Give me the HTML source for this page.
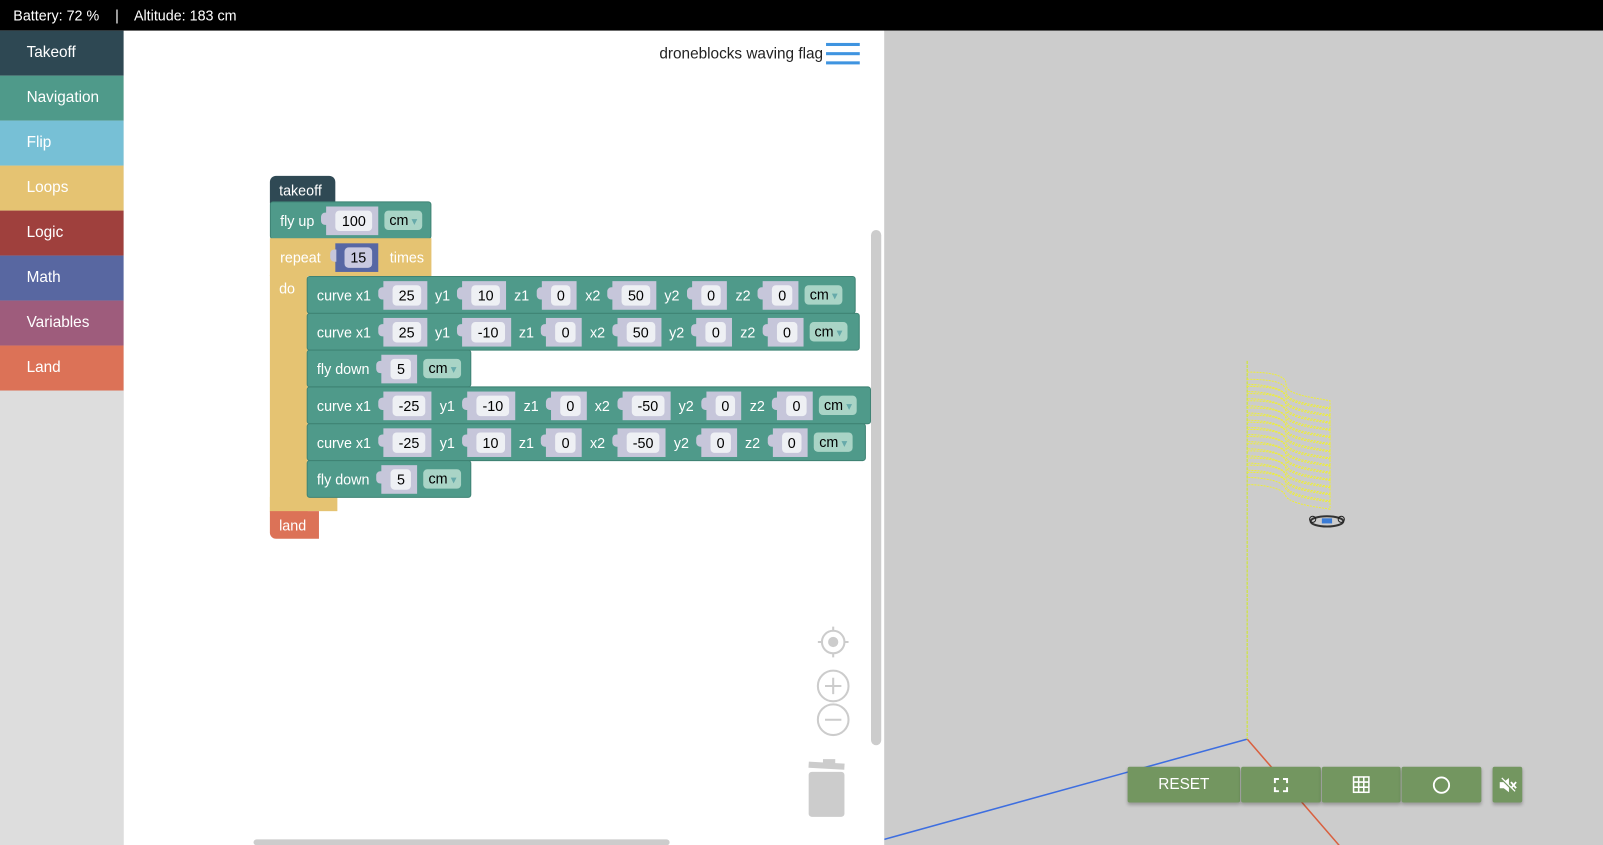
<!DOCTYPE html>
<html><head><meta charset="utf-8">
<style>
*{box-sizing:border-box;margin:0;padding:0}
html,body{width:1603px;height:845px;overflow:hidden;background:#ccc;font-family:"Liberation Sans",Arial,sans-serif}
#w{position:absolute;left:0;top:0;width:1568px;height:827px;transform:scale(1.02232);transform-origin:0 0}
.a{position:absolute}
#top{left:0;top:0;width:1568px;height:30px;background:#000;color:#fff;font-size:14px;line-height:30px;padding-left:13px;white-space:pre}
#side{left:0;top:30px;width:121px;height:797px;background:#ddd}
.it{height:44px;color:#fff;font-size:15px;line-height:44px;padding-left:26px}
#ws{left:121px;top:30px;width:744px;height:797px;background:#fff}
#right{left:865px;top:30px;width:703px;height:797px;background:#ccc}
.blk{position:absolute;color:#fff;font-size:14px;display:flex;align-items:center;white-space:nowrap}
.g{background:#4f9a8a;border:1px solid #3f8374;border-radius:3px}
.slot{background:#c6c6da;height:28px;padding:0 6px 0 9px;display:flex;align-items:center;position:relative;margin-left:12px}
.slot:before{content:"";position:absolute;left:-5px;top:6px;width:6px;height:12px;background:#c6c6da;border-radius:4px 0 0 4px}
.f{background:#eef0f4;color:#000;height:20px;line-height:20px;border-radius:4px;padding:0 6px;font-size:14px}
.lb{margin-left:8px}
.dd{background:#a9d4c6;color:#000;height:19px;line-height:19px;border-radius:4px;padding:0 5px;margin-left:6px;font-size:14px}
.dd:after{content:" \25BE";color:#6aa;font-size:11px}
.btn{position:absolute;top:750px;height:35px;line-height:35px;background:#739660;border-radius:2px;color:#fff;display:flex;align-items:center;justify-content:center;box-shadow:0 2px 3px rgba(0,0,0,.25);font-size:15px}
</style></head><body><div id="w">
<div class="a" id="top">Battery: 72 %    |    Altitude: 183 cm</div>
<div class="a" id="side">
<div class="it" style="background:#2e4853">Takeoff</div>
<div class="it" style="background:#4f9a8a">Navigation</div>
<div class="it" style="background:#77c0d6">Flip</div>
<div class="it" style="background:#e5c372">Loops</div>
<div class="it" style="background:#9f403d">Logic</div>
<div class="it" style="background:#5867a1">Math</div>
<div class="it" style="background:#9e5c7c">Variables</div>
<div class="it" style="background:#dc7257">Land</div>
</div>
<div class="a" id="ws"></div>
<div class="a" id="right"></div>
<div class="a" style="left:645px;top:44px;font-size:15px;color:#222">droneblocks waving flag</div>
<div class="a" style="left:808px;top:42px;width:33px;height:3px;background:#3f94e0"></div>
<div class="a" style="left:808px;top:51px;width:33px;height:3px;background:#3f94e0"></div>
<div class="a" style="left:808px;top:60px;width:33px;height:3px;background:#3f94e0"></div>
<div class="a" style="left:852px;top:225px;width:10px;height:504px;background:#ccc;border-radius:5px"></div>
<div class="a" style="left:248px;top:821px;width:407px;height:6px;background:#ccc;border-radius:3px"></div>
<svg class="a" style="left:780px;top:600px" width="80" height="210" fill="none" stroke="#ccc" stroke-width="2">
<circle cx="35" cy="28" r="11"/><circle cx="35" cy="28" r="4" fill="#ccc"/><path d="M35 13v4M35 39v4M20 28h4M46 28h4"/>
<circle cx="35" cy="71" r="15"/><path d="M27 71h16M35 63v16"/>
<circle cx="35" cy="104" r="15"/><path d="M27 104h16"/>
<path d="M11 148l35 2" stroke-width="6"/><path d="M25 145h12" stroke-width="5"/>
<rect x="11" y="155" width="35" height="44" rx="3" fill="#ccc" stroke="none"/>
</svg>
<div class="blk" style="left:264px;top:172px;width:64px;height:27px;background:#2f4954;border-radius:6px 6px 0 0;padding-left:9px">takeoff</div>
<div class="blk g" style="left:264px;top:197px;width:158px;height:37px;padding-left:9px">fly up<div class="slot"><span class="f">100</span></div><span class="dd">cm</span></div>
<div class="a" style="left:264px;top:233px;width:158px;height:37px;background:#e5c372"></div>
<div class="a" style="left:264px;top:269px;width:37px;height:232px;background:#e5c372"></div>
<div class="a" style="left:264px;top:486px;width:66px;height:14px;background:#e5c372"></div>
<div class="blk" style="left:274px;top:233px;height:37px">repeat<div class="slot" style="background:#5767a4;margin-left:14px"><span class="f" style="background:#c9c9e0">15</span></div><span class="lb" style="margin-left:11px">times</span></div>
<div class="blk" style="left:273px;top:273px;height:18px">do</div>
<div class="blk g" style="left:300px;top:270px;width:537px;height:37px;padding-left:9px">curve x1<div class="slot"><span class="f">25</span></div><span class="lb">y1</span><div class="slot"><span class="f">10</span></div><span class="lb">z1</span><div class="slot"><span class="f">0</span></div><span class="lb">x2</span><div class="slot"><span class="f">50</span></div><span class="lb">y2</span><div class="slot"><span class="f">0</span></div><span class="lb">z2</span><div class="slot"><span class="f">0</span></div><span class="dd">cm</span></div>
<div class="blk g" style="left:300px;top:306px;width:541px;height:37px;padding-left:9px">curve x1<div class="slot"><span class="f">25</span></div><span class="lb">y1</span><div class="slot"><span class="f">-10</span></div><span class="lb">z1</span><div class="slot"><span class="f">0</span></div><span class="lb">x2</span><div class="slot"><span class="f">50</span></div><span class="lb">y2</span><div class="slot"><span class="f">0</span></div><span class="lb">z2</span><div class="slot"><span class="f">0</span></div><span class="dd">cm</span></div>
<div class="blk g" style="left:300px;top:342px;width:161px;height:37px;padding-left:9px">fly down<div class="slot"><span class="f">5</span></div><span class="dd">cm</span></div>
<div class="blk g" style="left:300px;top:378px;width:552px;height:37px;padding-left:9px">curve x1<div class="slot"><span class="f">-25</span></div><span class="lb">y1</span><div class="slot"><span class="f">-10</span></div><span class="lb">z1</span><div class="slot"><span class="f">0</span></div><span class="lb">x2</span><div class="slot"><span class="f">-50</span></div><span class="lb">y2</span><div class="slot"><span class="f">0</span></div><span class="lb">z2</span><div class="slot"><span class="f">0</span></div><span class="dd">cm</span></div>
<div class="blk g" style="left:300px;top:414px;width:547px;height:37px;padding-left:9px">curve x1<div class="slot"><span class="f">-25</span></div><span class="lb">y1</span><div class="slot"><span class="f">10</span></div><span class="lb">z1</span><div class="slot"><span class="f">0</span></div><span class="lb">x2</span><div class="slot"><span class="f">-50</span></div><span class="lb">y2</span><div class="slot"><span class="f">0</span></div><span class="lb">z2</span><div class="slot"><span class="f">0</span></div><span class="dd">cm</span></div>
<div class="blk g" style="left:300px;top:450px;width:161px;height:37px;padding-left:9px">fly down<div class="slot"><span class="f">5</span></div><span class="dd">cm</span></div>
<div class="blk" style="left:264px;top:500px;width:48px;height:27px;background:#dc7257;border-radius:0 0 0 6px;padding-left:9px">land</div>
<svg class="a" style="left:865px;top:30px" width="703" height="797">
<line x1="355" y1="693" x2="0" y2="791" stroke="#3d6ee0" stroke-width="1.5"/>
<line x1="355" y1="693" x2="445" y2="797" stroke="#d9603f" stroke-width="1.5"/>
<line x1="355" y1="323" x2="355" y2="693" stroke="#cfe05a" stroke-width="1.5" stroke-dasharray="3 1"/>
<g fill="none" stroke="#eeee3a" stroke-width="1" stroke-dasharray="2 1">
<path id="lp" d="M355 334 C375 334 393 336 393 346 C393 356 415 358 436 362 L436 370 C415 367 395 364 392 356 C390 350 372 346 355 346"/>
</g>
<g fill="none" stroke="#eeee3a" stroke-width="1" stroke-dasharray="2 1">
<use href="#lp" y="7"/><use href="#lp" y="14"/><use href="#lp" y="21"/><use href="#lp" y="28"/><use href="#lp" y="35"/><use href="#lp" y="42"/><use href="#lp" y="49"/><use href="#lp" y="56"/><use href="#lp" y="63"/><use href="#lp" y="70"/><use href="#lp" y="77"/><use href="#lp" y="84"/><use href="#lp" y="91"/><use href="#lp" y="98"/>
</g>
<g transform="translate(433 480)"><ellipse cx="0" cy="0" rx="16" ry="5" fill="none" stroke="#333" stroke-width="2"/><rect x="-5" y="-3" width="10" height="5" fill="#3a7bd5"/><circle cx="-14" cy="-2" r="3" fill="none" stroke="#222"/><circle cx="14" cy="-2" r="3" fill="none" stroke="#222"/></g>
</svg>
<div class="btn" style="left:1103px;width:110px">RESET</div>
<div class="btn" style="left:1214px;width:78px"><svg width="14" height="14" fill="none" stroke="#fff" stroke-width="2"><path d="M1 5V1h4M9 1h4v4M13 9v4H9M5 13H1V9"/></svg></div>
<div class="btn" style="left:1293px;width:77px"><svg width="17" height="17" fill="none" stroke="#fff" stroke-width="1.5"><rect x="1" y="1" width="15" height="15"/><path d="M6 1v15M11 1v15M1 6h15M1 11h15"/></svg></div>
<div class="btn" style="left:1371px;width:78px"><svg width="18" height="18" fill="none" stroke="#fff" stroke-width="1.8"><circle cx="9" cy="9" r="7.5"/></svg></div>
<div class="btn" style="left:1460px;width:29px"><svg width="18" height="16"><path d="M1 5h4l5-4v14l-5-4H1z" fill="#fff"/><path d="M12 5l5 6M17 5l-5 6" stroke="#fff" stroke-width="1.8"/><path d="M2 1l14 14" stroke="#739660" stroke-width="2"/><path d="M3 1l13 13" stroke="#fff" stroke-width="1.2"/></svg></div>
</div></body></html>
